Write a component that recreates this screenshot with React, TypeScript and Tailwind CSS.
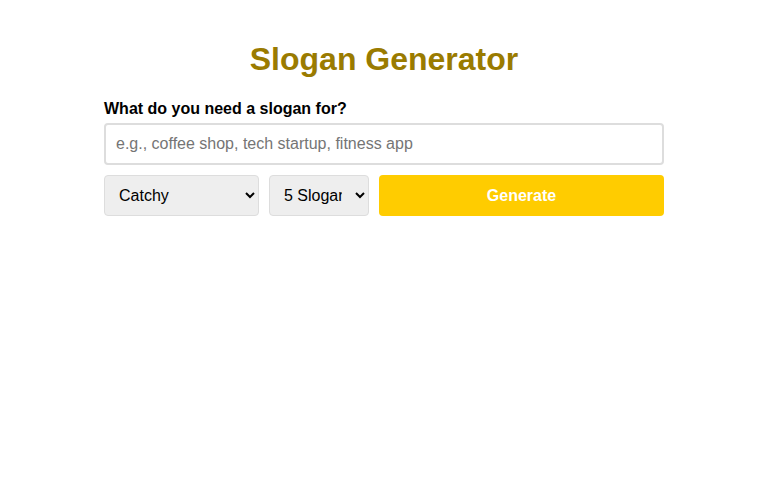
export default function App() {
  return (
    <div className="min-h-screen bg-white font-['Liberation_Sans',Arial,sans-serif]">
      <div className="mx-auto w-[560px] pt-[40px]">
        <h1 className="mb-[22px] text-center text-[32px] font-bold leading-[38px] text-[#9a7b00]">
          Slogan Generator
        </h1>
        <label className="mb-[5px] block text-[16px] font-bold leading-[18px] text-black">
          What do you need a slogan for?
        </label>
        <input
          type="text"
          placeholder="e.g., coffee shop, tech startup, fitness app"
          className="block h-[42px] w-full rounded-[4px] border-2 border-[#ddd] px-[10px] text-[16px] text-black outline-none placeholder:text-[#757575]"
        />
        <div className="mt-[10px] flex gap-[10px]">
          <select
            defaultValue="catchy"
            className="h-[41px] w-[155px] rounded-[4px] border border-[#ddd] bg-[#eee] px-[10px] text-[16px] text-black"
          >
            <option value="catchy">Catchy</option>
            <option value="professional">Professional</option>
            <option value="funny">Funny</option>
          </select>
          <select
            defaultValue="5"
            className="h-[41px] w-[100px] rounded-[4px] border border-[#ddd] bg-[#eee] px-[10px] text-[16px] text-black"
          >
            <option value="5">5 Slogans</option>
            <option value="10">10 Slogans</option>
          </select>
          <button className="h-[41px] flex-1 rounded-[4px] bg-[#ffcc00] text-[16px] font-bold text-white">
            Generate
          </button>
        </div>
      </div>
    </div>
  );
}
